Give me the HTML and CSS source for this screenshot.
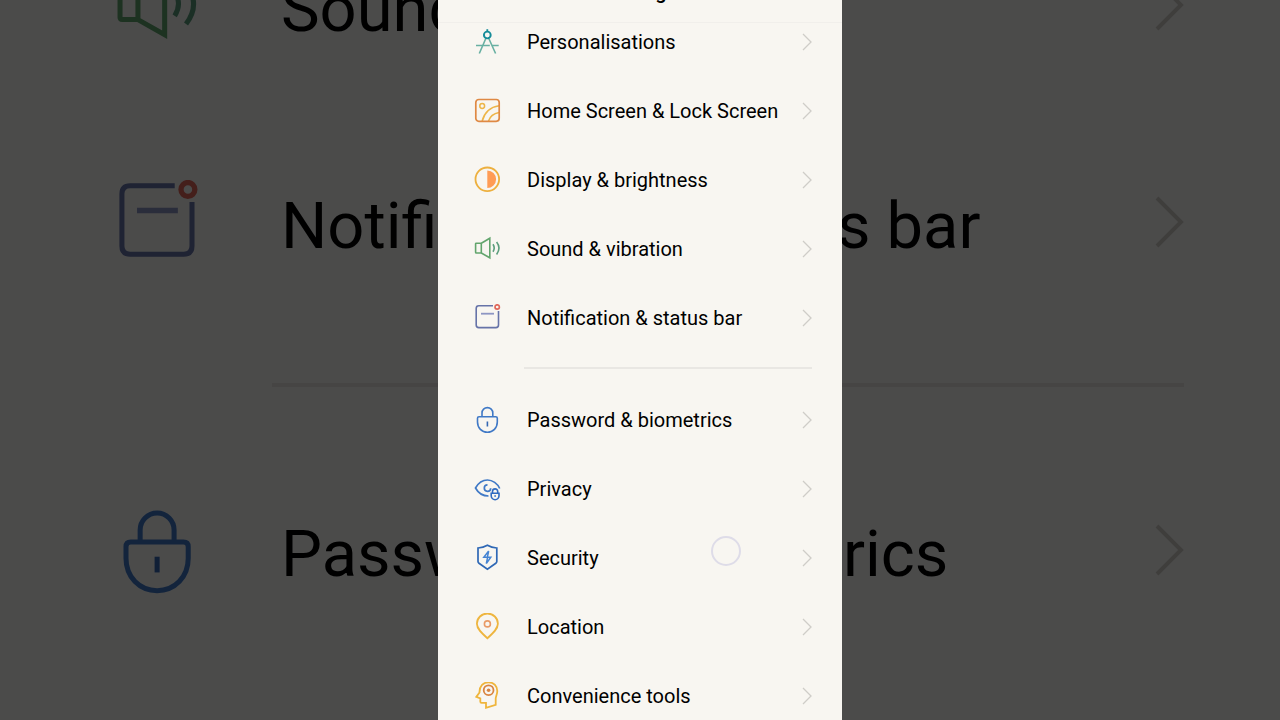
FILE: index.html
```html
<!DOCTYPE html>
<html lang="en">
<head>
    <meta charset="UTF-8">
    <meta name="viewport" content="width=device-width, initial-scale=1.0">
    <title>Settings</title>
    <link rel="stylesheet" href="styles.css">
</head>
<body>
    <svg class="sprite" aria-hidden="true">
        <symbol id="chevron" viewBox="0 0 10 18">
            <path d="M1 1L9 9L1 17" stroke="#cfcdc8" stroke-width="1.3"/>
        </symbol>
        <symbol id="compass" viewBox="0 0 28 28">
            <path d="M11.8 10.5L5.3 25.5M14.8 10.5L21.6 25.5M2 17.5H15.8M18.5 17.5H24.7" stroke="#68b0a2" stroke-width="1.6"/>
            <circle cx="13.3" cy="7" r="3.4" stroke="#168c99" stroke-width="1.9"/>
            <path d="M13.3 1.2V3.5" stroke="#168c99" stroke-width="1.8"/>
        </symbol>
        <symbol id="wallpaper" viewBox="0 0 28 28">
            <path d="M8.2 24C10.5 15.5 16.5 10 25 8.8M14.5 24C16 19.5 19.5 16.5 25 15.5" stroke="#edb548" stroke-width="1.6"/>
            <circle cx="8.2" cy="9" r="2.4" stroke="#edb548" stroke-width="1.5"/>
            <rect x="1.8" y="2.5" width="23.4" height="21.8" rx="3" stroke="#df8944" stroke-width="1.7"/>
        </symbol>
        <symbol id="display" viewBox="0 0 28 28">
            <circle cx="13.3" cy="13.3" r="11.8" stroke="#edb03f" stroke-width="1.8"/>
            <path d="M13.3 4.5A8.8 8.8 0 0 1 13.3 22.1Z" fill="#ff9c55"/>
        </symbol>
        <symbol id="sound" viewBox="0 0 28 28">
            <path d="M7.3 8.2H2.3Q1.6 8.2 1.6 9V17.3Q1.6 18 2.3 18H7.3M7.3 8.2V18L15.8 22.8V3.2Z" stroke="#62a56d" stroke-width="1.6"/>
            <path d="M19 9.2Q21.4 13 19 16.8M22.6 7Q27.4 13 22.6 19.4" stroke="#5b9d7c" stroke-width="1.6"/>
        </symbol>
        <symbol id="notification" viewBox="0 0 28 28">
            <path d="M19 1.8H4.8Q2.2 1.8 2.2 4.4V21Q2.2 23.6 4.8 23.6H21.9Q24.5 23.6 24.5 21V7" stroke="#6673a8" stroke-width="1.6"/>
            <path d="M7 9.7H20" stroke="#8d96c3" stroke-width="1.8"/>
            <circle cx="23.2" cy="3" r="2.2" stroke="#e0675b" stroke-width="1.7"/>
        </symbol>
        <symbol id="lock" viewBox="0 0 28 28">
            <path d="M8 10.8V7A5.4 5.4 0 0 1 18.8 7V10.8M5 10.8H21.8Q23.3 10.8 23.3 12.3V16C23.3 22 19 26.3 13.4 26.3S3.5 22 3.5 16V12.3Q3.5 10.8 5 10.8Z" stroke="#4079c6" stroke-width="1.6"/>
            <path d="M13.4 15.5V20.5" stroke="#3568b3" stroke-width="1.6"/>
        </symbol>
        <symbol id="privacy" viewBox="0 0 28 28">
            <path d="M25.7 13.5C23.5 8.5 18.5 5 13.5 5S4 8.5 1.5 13C4 17.6 8.5 21 14.5 21" stroke="#4079c6" stroke-width="1.7"/>
            <path d="M13.5 9.9A3.2 3.2 0 1 0 16.7 13.2" stroke="#4079c6" stroke-width="1.7"/>
            <path d="M18.5 18V16.5A2.6 2.6 0 0 1 23.7 16.5V18M17.2 18.3H25V20.8A3.9 3.9 0 0 1 17.2 20.8Z" stroke="#2f6bc1" stroke-width="1.6"/>
            <path d="M21.1 20V22" stroke="#2f6bc1" stroke-width="1.2"/>
        </symbol>
        <symbol id="security" viewBox="0 0 28 28">
            <path d="M13.4 1.3C10.5 3 7.5 3.8 4 4V17.5Q4 18.5 5 19.3L13.4 25.2L21.8 19.3Q22.8 18.5 22.8 17.5V4C19.3 3.8 16.3 3 13.4 1.3Z" stroke="#2f68b5" stroke-width="1.7"/>
            <path d="M14.7 7L9.8 13.3H16.8L12.3 19.6M14.7 7L13.3 13.3M12.3 19.6L13.6 13.3" stroke="#4584d3" stroke-width="1.5"/>
        </symbol>
        <symbol id="location" viewBox="0 0 28 28">
            <path d="M13.4 25.2C8 20.5 2.9 16 2.9 10.8A10.5 10.3 0 0 1 23.9 10.8C23.9 16 18.8 20.5 13.4 25.2Z" stroke="#eeb53f" stroke-width="1.8"/>
            <circle cx="13.4" cy="10.9" r="3" stroke="#e99a66" stroke-width="1.6"/>
        </symbol>
        <symbol id="tools" viewBox="0 0 28 28">
            <path d="M12 25.8V20.8H7.5Q6.3 20.8 6.3 19.5V16.3L2.3 14.9L5.5 10.5C5.3 4 9.5 .3 14.5 .3C20 .3 23.3 4.5 23.3 9C23.3 12.5 21.7 14.3 21.7 16.8V22.9Z" stroke="#efb53c" stroke-width="1.8"/>
            <circle cx="14.6" cy="8.2" r="4.9" stroke="#d98440" stroke-width="1.8"/>
            <circle cx="14.6" cy="8.2" r="1.8" fill="#d98440"/>
        </symbol>
    </svg>

    <div class="stage">
        <!-- enlarged, dimmed copy of the list behind the phone -->
        <div class="backdrop" aria-hidden="true">
            <div class="list">
                <div class="row">
                    <svg class="icon"><use href="#sound"/></svg>
                    <span class="label">Sound &amp; vibration</span>
                    <svg class="chevron"><use href="#chevron"/></svg>
                </div>
                <div class="row">
                    <svg class="icon"><use href="#notification"/></svg>
                    <span class="label">Notification &amp; status bar</span>
                    <svg class="chevron"><use href="#chevron"/></svg>
                </div>
                <div class="divider"></div>
                <div class="row">
                    <svg class="icon"><use href="#lock"/></svg>
                    <span class="label">Password &amp; biometrics</span>
                    <svg class="chevron"><use href="#chevron"/></svg>
                </div>
            </div>
        </div>

        <main class="phone">
            <header class="header">
                <h1>Settings</h1>
            </header>
            <nav class="list">
                <a class="row" href="#">
                    <svg class="icon"><use href="#compass"/></svg>
                    <span class="label">Personalisations</span>
                    <svg class="chevron"><use href="#chevron"/></svg>
                </a>
                <a class="row" href="#">
                    <svg class="icon"><use href="#wallpaper"/></svg>
                    <span class="label">Home Screen &amp; Lock Screen</span>
                    <svg class="chevron"><use href="#chevron"/></svg>
                </a>
                <a class="row" href="#">
                    <svg class="icon"><use href="#display"/></svg>
                    <span class="label">Display &amp; brightness</span>
                    <svg class="chevron"><use href="#chevron"/></svg>
                </a>
                <a class="row" href="#">
                    <svg class="icon"><use href="#sound"/></svg>
                    <span class="label">Sound &amp; vibration</span>
                    <svg class="chevron"><use href="#chevron"/></svg>
                </a>
                <a class="row" href="#">
                    <svg class="icon"><use href="#notification"/></svg>
                    <span class="label">Notification &amp; status bar</span>
                    <svg class="chevron"><use href="#chevron"/></svg>
                </a>
                <div class="divider"></div>
                <a class="row" href="#">
                    <svg class="icon"><use href="#lock"/></svg>
                    <span class="label">Password &amp; biometrics</span>
                    <svg class="chevron"><use href="#chevron"/></svg>
                </a>
                <a class="row" href="#">
                    <svg class="icon"><use href="#privacy"/></svg>
                    <span class="label">Privacy</span>
                    <svg class="chevron"><use href="#chevron"/></svg>
                </a>
                <a class="row" href="#">
                    <svg class="icon"><use href="#security"/></svg>
                    <span class="label">Security</span>
                    <svg class="chevron"><use href="#chevron"/></svg>
                </a>
                <a class="row" href="#">
                    <svg class="icon"><use href="#location"/></svg>
                    <span class="label">Location</span>
                    <svg class="chevron"><use href="#chevron"/></svg>
                </a>
                <a class="row" href="#">
                    <svg class="icon"><use href="#tools"/></svg>
                    <span class="label">Convenience tools</span>
                    <svg class="chevron"><use href="#chevron"/></svg>
                </a>
            </nav>
            <span class="touch"></span>
        </main>
    </div>
</body>
</html>
```
FILE: styles.css
```css
* {
    box-sizing: border-box;
}
body {
    margin: 0;
    background-color: #000000;
    font-family: Roboto, "Liberation Sans", sans-serif;
    color: #000000;
}
.sprite {
    display: none;
}
.stage {
    display: grid;
    height: 100vh;
    overflow: hidden;
}
.backdrop,
.phone {
    grid-area: 1 / 1;
    min-height: 0;
    overflow: hidden;
}
.row {
    display: flex;
    align-items: center;
    color: inherit;
    text-decoration: none;
}
.icon,
.chevron {
    flex: none;
    fill: none;
    overflow: visible;
}
.label {
    flex: 1;
    white-space: nowrap;
}

/* phone screen */
.phone {
    position: relative;
    justify-self: center;
    height: 100vh;
    aspect-ratio: 101 / 180;
    background-color: #f8f6f1;
}
.header {
    position: relative;
    z-index: 1;
    display: flex;
    justify-content: center;
    align-items: flex-start;
    height: 23px;
    border-bottom: 1px solid #f1efeb;
    background-color: #f8f6f1;
}
.header h1 {
    margin: -20px 0 0;
    font-size: 20px;
    line-height: 24px;
    font-weight: 500;
}
.phone .list {
    margin-top: -16px;
}
.phone .row {
    height: 69px;
    padding: 0 30px 0 36px;
    font-size: 20px;
}
.phone .icon {
    width: 28px;
    height: 28px;
    margin-right: 25px;
}
.phone .chevron {
    width: 10px;
    height: 18px;
}
.phone .divider {
    height: 2px;
    margin: 15px 30px 16px 86px;
    background-color: #e9e7e3;
}
.touch {
    position: absolute;
    top: 536px;
    left: 273px;
    width: 30px;
    height: 30px;
    border: 2px solid #dedce8;
    border-radius: 50%;
}

/* dimmed backdrop */
.backdrop {
    background-color: #f7f7f6;
    opacity: 0.3;
}
.backdrop .list {
    margin-top: -102px;
}
.backdrop .row {
    height: 217px;
    padding: 0 96px 0 115px;
    font-size: 65px;
}
.backdrop .icon {
    width: 88px;
    height: 88px;
    margin-right: 78px;
}
.backdrop .label {
    padding-top: 4px;
}
.backdrop .chevron {
    width: 30px;
    height: 54px;
    margin-bottom: 4px;
}
.backdrop .divider {
    height: 4px;
    margin: 51px 96px 56px 272px;
    background-color: #e6e5e0;
}
```
